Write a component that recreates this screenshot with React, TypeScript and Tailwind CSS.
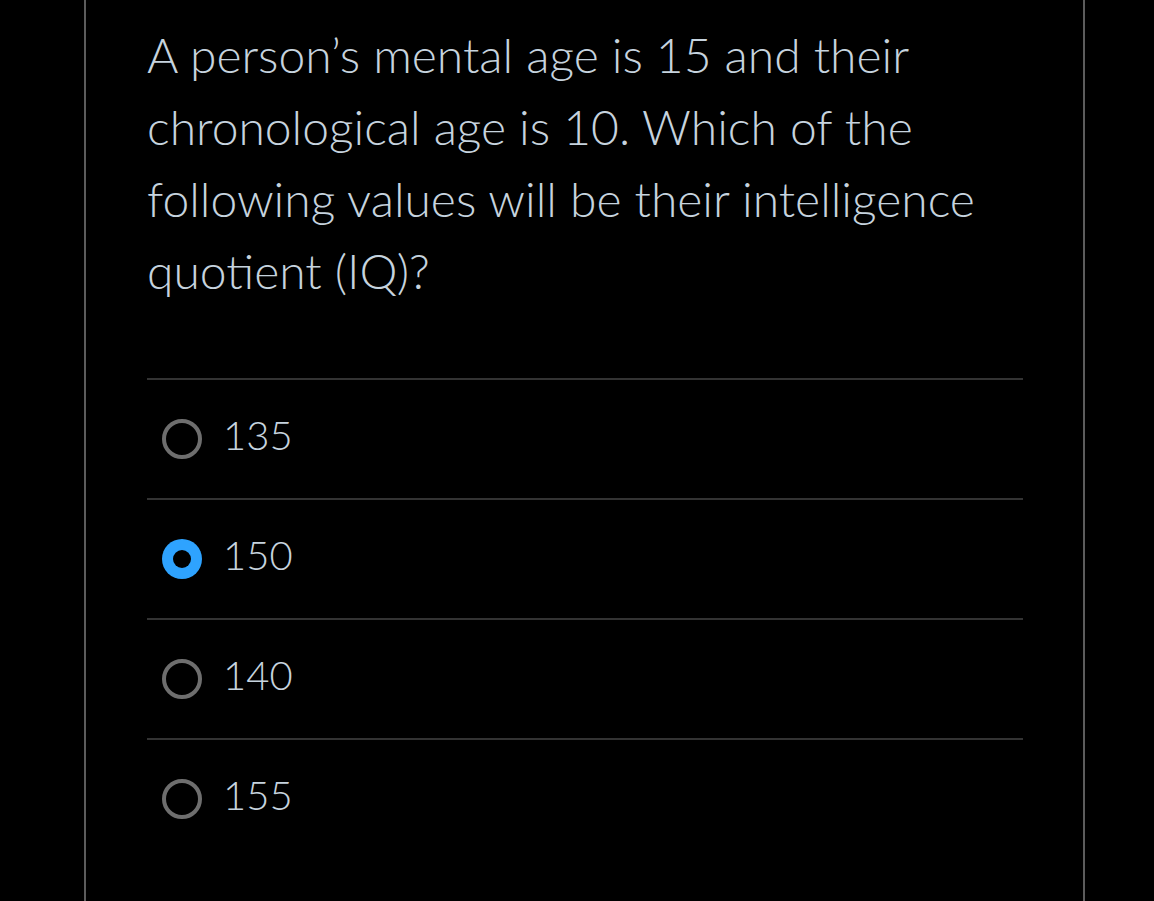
import React from 'react';

const options = [
  { value: '135', selected: false },
  { value: '150', selected: true },
  { value: '140', selected: false },
  { value: '155', selected: false },
];

function Radio({ selected }: { selected: boolean }) {
  if (selected) {
    return (
      <span className="flex h-[40px] w-[40px] shrink-0 items-center justify-center rounded-full bg-[#2ea3ff]">
        <span className="h-[18px] w-[18px] rounded-full bg-black" />
      </span>
    );
  }
  return <span className="h-[40px] w-[40px] shrink-0 rounded-full border-[4px] border-[#6e6e6e]" />;
}

export default function App() {
  return (
    <div className="min-h-[901px] w-full bg-black" style={{ fontFamily: '"Lato Light", Lato, "Open Sans", sans-serif' }}>
      <div className="ml-[84px] min-h-[901px] w-[1001px] border-x-2 border-[#5c5c5c] pl-[61px] pr-[60px] pt-[19px]">
        <p className="text-[48px] font-light leading-[72px] text-[#c6d3de]">
          A person’s mental age is 15 and their chronological age is 10. Which of the following values will be their
          intelligence quotient (IQ)?
        </p>

        <div className="mt-[71px]">
          {options.map((o, i) => (
            <div key={o.value} className={i < options.length - 1 ? 'border-b-2 border-[#333333]' : ''}>
              {i === 0 && <div className="h-[2px] bg-[#333333]" />}
              <div className="flex h-[118px] items-center gap-[21px] pl-[15px]">
                <Radio selected={o.selected} />
                <span className="pb-[8px] text-[40px] font-light leading-none text-[#c6d3de]">{o.value}</span>
              </div>
            </div>
          ))}
        </div>
      </div>
    </div>
  );
}
